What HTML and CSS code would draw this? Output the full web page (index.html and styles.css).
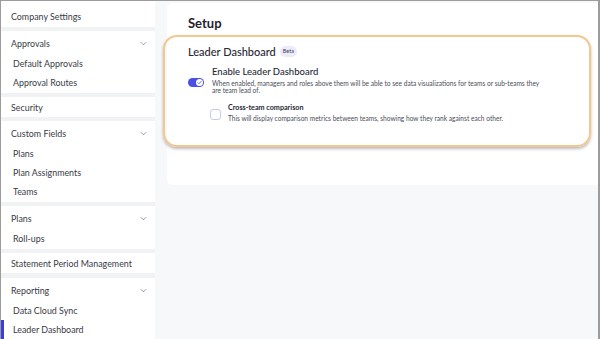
FILE: index.html
```html
<!DOCTYPE html>
<html>
<head>
<meta charset="utf-8">
<link rel="stylesheet" href="styles.css">
</head>
<body>
<div class="frame">
  <nav class="sidebar">
    <div class="group first"><div class="head">Company Settings</div></div>
    <div class="group">
      <div class="head">Approvals<svg class="chev" viewBox="0 0 8 5"><path d="M1 1l3 3 3-3" /></svg></div>
      <div class="item">Default Approvals</div>
      <div class="item">Approval Routes</div>
    </div>
    <div class="group single"><div class="head">Security</div></div>
    <div class="group">
      <div class="head">Custom Fields<svg class="chev" viewBox="0 0 8 5"><path d="M1 1l3 3 3-3" /></svg></div>
      <div class="item">Plans</div>
      <div class="item">Plan Assignments</div>
      <div class="item">Teams</div>
    </div>
    <div class="group">
      <div class="head">Plans<svg class="chev" viewBox="0 0 8 5"><path d="M1 1l3 3 3-3" /></svg></div>
      <div class="item">Roll-ups</div>
    </div>
    <div class="group single"><div class="head">Statement Period Management</div></div>
    <div class="group last">
      <div class="head">Reporting<svg class="chev" viewBox="0 0 8 5"><path d="M1 1l3 3 3-3" /></svg></div>
      <div class="item">Data Cloud Sync</div>
      <div class="item active">Leader Dashboard</div>
    </div>
  </nav>
  <main class="main">
    <section class="card">
      <h1 class="title">Setup</h1>
      <div class="highlight">
        <div class="ld-head">
          <span class="ld-title">Leader Dashboard</span>
          <span class="badge">Beta</span>
        </div>
        <div class="setting">
          <div class="toggle"><span class="knob"><svg viewBox="0 0 8 8"><path d="M2.2 4.2l1.3 1.3 2.4-2.8" /></svg></span></div>
          <div class="setting-text">
            <div class="setting-name">Enable Leader Dashboard</div>
            <div class="setting-desc">When enabled, managers and roles above them will be able to see data visualizations for teams or sub-teams they are team lead of.</div>
          </div>
        </div>
        <div class="sub-setting">
          <div class="checkbox"></div>
          <div class="setting-text">
            <div class="sub-name">Cross-team comparison</div>
            <div class="setting-desc">This will display comparison metrics between teams, showing how they rank against each other.</div>
          </div>
        </div>
      </div>
    </section>
  </main>
</div>
</body>
</html>
```
FILE: styles.css
```css
* { box-sizing: border-box; }
html, body { margin: 0; padding: 0; }
body {
  width: 600px;
  height: 339px;
  overflow: hidden;
  font-family: "Lato", "Open Sans", sans-serif;
  color: #2b2d3a;
  background: #fff;
}
.frame {
  width: 600px;
  height: 339px;
  border-top: 1px solid #9c9c9c;
  border-left: 1px solid #9c9c9c;
  border-right: 2px solid #9c9c9c;
  display: flex;
  background: #f6f8fa;
}
.sidebar {
  width: 154px;
  flex: none;
  display: flex;
  flex-direction: column;
  gap: 4px;
  background: #f1f2f4;
}
.group {
  background: #fff;
  padding: 2px 0 1px;
}
.group.first { padding: 5px 0 0; height: 26px; }
.group.single { padding: 0; height: 20px; display: flex; align-items: center; }
.group.last { flex: 1; margin-top: 1px; }
.head {
  height: 21px;
  line-height: 21px;
  font-size: 8.9px;
  padding-left: 10px;
  padding-right: 8px;
  display: flex;
  align-items: center;
  justify-content: space-between;
  color: #383a46;
  width: 100%;
}
.chev {
  width: 7px;
  height: 5px;
  fill: none;
  stroke: #7a7d88;
  stroke-width: 0.9;
}
.item {
  height: 19px;
  line-height: 19px;
  font-size: 8.9px;
  padding-left: 12px;
  color: #383a46;
  position: relative;
}
.item.active::before {
  content: "";
  position: absolute;
  left: 0;
  top: 0;
  bottom: -6px;
  width: 3px;
  background: #3c3fd6;
}
.main {
  flex: 1;
  padding: 2px 0 0 12px;
}
.card {
  background: #fff;
  border-radius: 6px 0 0 6px;
  height: 182px;
  padding: 12px 7px 0 0;
}
.title {
  margin: 0 0 4px 21px;
  font-size: 13px;
  font-weight: 700;
  line-height: 16px;
  color: #1f2130;
}
.highlight {
  margin-left: -4px;
  border: 2px solid #f4c78f;
  border-radius: 14px;
  box-shadow: 0 2px 3px rgba(60, 60, 70, 0.35);
  height: 112px;
  padding: 7px 0 0 23px;
}
.ld-head {
  display: flex;
  align-items: center;
  gap: 4px;
  height: 14px;
}
.ld-title {
  font-size: 11px;
  font-weight: 500;
  color: #262835;
}
.badge {
  font-size: 5.5px;
  background: #ecebfb;
  color: #3a3c55;
  border-radius: 6px;
  padding: 2px 3px;
  line-height: 7px;
}
.setting {
  display: flex;
  align-items: flex-start;
  gap: 8px;
  margin-top: 8px;
}
.toggle {
  width: 16px;
  height: 9px;
  border-radius: 5px;
  background: #4a50e6;
  margin-top: 12px;
  flex: none;
  position: relative;
}
.knob {
  position: absolute;
  right: 1px;
  top: 1px;
  width: 7px;
  height: 7px;
  border-radius: 50%;
  background: #fff;
}
.knob svg {
  width: 7px;
  height: 7px;
  display: block;
  fill: none;
  stroke: #4a50e6;
  stroke-width: 0.9;
  stroke-linecap: round;
}
.setting-name {
  font-size: 9.5px;
  font-weight: 500;
  line-height: 12px;
  color: #262835;
}
.setting-desc {
  font-size: 6.6px;
  line-height: 6.6px;
  color: #4a4c58;
  width: 336px;
  margin-top: 2px;
}
.sub-setting {
  display: flex;
  align-items: flex-start;
  gap: 7px;
  margin-top: 10px;
  margin-left: 22px;
}
.checkbox {
  width: 11px;
  height: 11px;
  border: 1.5px solid #c7c9f4;
  border-radius: 3px;
  margin-top: 6px;
  flex: none;
}
.sub-name {
  font-size: 7.2px;
  font-weight: 700;
  line-height: 9px;
  color: #262835;
}
.sub-setting .setting-desc { margin-top: 3px; width: 330px; }
```
